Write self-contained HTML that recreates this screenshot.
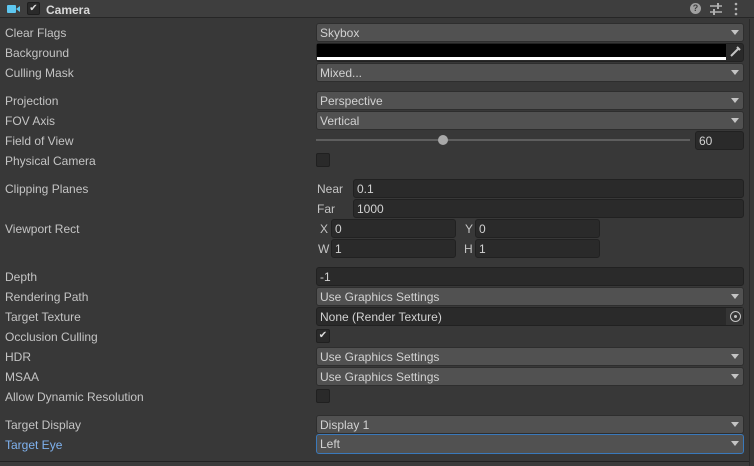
<!DOCTYPE html><html><head><style>
body{margin:0;width:754px;height:466px;background:#383838;overflow:hidden;font-family:"Liberation Sans",sans-serif;font-size:12px;color:#c4c4c4;position:relative}
div{position:absolute;box-sizing:border-box}
.l{left:5px;line-height:16px;white-space:nowrap;margin-top:1px}
.dd{left:316px;width:428px;height:19px;background:#515151;border:1px solid #2e2e2e;border-radius:3px;padding-left:3px;line-height:18px;color:#d2d2d2}
.dd:after{content:"";position:absolute;right:4px;top:6px;border-left:4px solid transparent;border-right:4px solid transparent;border-top:5px solid #c4c4c4}
.tf{height:19px;background:#2a2a2a;border:1px solid #212121;border-radius:3px;padding-left:3px;line-height:18px;color:#d2d2d2}
.cb{left:316px;width:14px;height:14px;background:#2a2a2a;border:1px solid #202020;border-radius:2px}
.s{line-height:16px;color:#c4c4c4;margin-top:1px}
</style></head><body>
<div style="left:0;top:0;width:754px;height:18px;background:#3e3e3e;border-bottom:1px solid #262626"></div>
<svg style="position:absolute;left:7px;top:3px" width="14" height="12"><rect x="0" y="2" width="9" height="8" rx="1" fill="#5ec7f0"/><path d="M9 6 L13 3 V9 Z" fill="#5ec7f0"/></svg>
<div style="left:27px;top:2px;width:13px;height:13px;background:#2a2a2a;border:1px solid #1e1e1e;border-radius:2px;color:#ddd;font-size:10px;line-height:11px;text-align:center">✔</div>
<div style="left:46px;top:2px;font-weight:bold;color:#d8d8d8;line-height:16px">Camera</div>
<div style="left:690px;top:3px;width:11px;height:11px;border-radius:50%;background:#a0a0a0;color:#3e3e3e;font-size:9px;font-weight:bold;line-height:11px;text-align:center">?</div>
<svg style="position:absolute;left:710px;top:3px" width="12" height="12"><path d="M0 3H12M0 9H12" stroke="#b0b0b0" stroke-width="1.5"/><rect x="7" y="0" width="2" height="6" fill="#b0b0b0"/><rect x="3" y="6" width="2" height="6" fill="#b0b0b0"/></svg>
<svg style="position:absolute;left:734px;top:2px" width="4" height="14"><circle cx="2" cy="2" r="1.3" fill="#b0b0b0"/><circle cx="2" cy="7" r="1.3" fill="#b0b0b0"/><circle cx="2" cy="12" r="1.3" fill="#b0b0b0"/></svg>
<div style="left:749px;top:19px;width:1px;height:447px;background:#2a2a2a"></div>

<div class="l" style="top:24px">Clear Flags</div><div class="dd" style="top:23px">Skybox</div>
<div class="l" style="top:44px">Background</div>
<div style="left:316px;top:43px;width:428px;height:19px;background:#2a2a2a;border:1px solid #222;border-radius:3px"></div>
<div style="left:317px;top:44px;width:409px;height:13px;background:#000"></div>
<div style="left:317px;top:57px;width:409px;height:3px;background:#fff"></div>
<svg style="position:absolute;left:729px;top:45px" width="13" height="13"><path d="M2 11 L9 4 M8 2 L11 5" stroke="#c4c4c4" stroke-width="2"/></svg>
<div class="l" style="top:64px">Culling Mask</div><div class="dd" style="top:63px">Mixed...</div>
<div class="l" style="top:92px">Projection</div><div class="dd" style="top:91px">Perspective</div>
<div class="l" style="top:112px">FOV Axis</div><div class="dd" style="top:111px">Vertical</div>
<div class="l" style="top:132px">Field of View</div>
<div style="left:316px;top:139px;width:374px;height:2px;background:#5e5e5e"></div>
<div style="left:438px;top:135px;width:10px;height:10px;border-radius:50%;background:#a8a8a8"></div>
<div class="tf" style="left:695px;top:131px;width:49px">60</div>
<div class="l" style="top:152px">Physical Camera</div><div class="cb" style="top:153px"></div>
<div class="l" style="top:180px">Clipping Planes</div>
<div class="s" style="left:317px;top:180px">Near</div><div class="tf" style="left:353px;top:179px;width:391px">0.1</div>
<div class="s" style="left:317px;top:200px">Far</div><div class="tf" style="left:353px;top:199px;width:391px">1000</div>
<div class="l" style="top:220px">Viewport Rect</div>
<div class="s" style="left:320px;top:220px">X</div><div class="tf" style="left:331px;top:219px;width:125px">0</div>
<div class="s" style="left:465px;top:220px">Y</div><div class="tf" style="left:475px;top:219px;width:125px">0</div>
<div class="s" style="left:318px;top:240px">W</div><div class="tf" style="left:331px;top:239px;width:125px">1</div>
<div class="s" style="left:464px;top:240px">H</div><div class="tf" style="left:475px;top:239px;width:125px">1</div>
<div class="l" style="top:268px">Depth</div><div class="tf" style="left:316px;top:267px;width:428px">-1</div>
<div class="l" style="top:288px">Rendering Path</div><div class="dd" style="top:287px">Use Graphics Settings</div>
<div class="l" style="top:308px">Target Texture</div><div class="tf" style="left:316px;top:307px;width:428px">None (Render Texture)</div>
<div style="left:726px;top:308px;width:17px;height:17px;background:#353535"></div>
<div style="left:730px;top:311px;width:11px;height:11px;border:1.5px solid #c4c4c4;border-radius:50%"></div>
<div style="left:734px;top:315px;width:3px;height:3px;background:#c4c4c4;border-radius:50%"></div>
<div class="l" style="top:328px">Occlusion Culling</div><div class="cb" style="top:329px;color:#ddd;font-size:10px;line-height:12px;text-align:center">✔</div>
<div class="l" style="top:348px">HDR</div><div class="dd" style="top:347px">Use Graphics Settings</div>
<div class="l" style="top:368px">MSAA</div><div class="dd" style="top:367px">Use Graphics Settings</div>
<div class="l" style="top:388px">Allow Dynamic Resolution</div><div class="cb" style="top:389px"></div>
<div class="l" style="top:416px">Target Display</div><div class="dd" style="top:415px">Display 1</div>
<div class="l" style="top:436px;color:#7fb2ef">Target Eye</div><div class="dd" style="top:434px;height:20px;border-color:#3a79bb">Left</div>
<div style="left:0;top:461px;width:749px;height:1px;background:#222"></div>
<div style="left:0;top:462px;width:749px;height:4px;background:#3b3b3b"></div>
</body></html>
